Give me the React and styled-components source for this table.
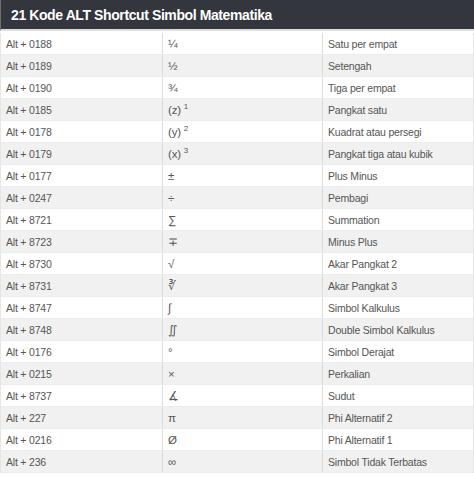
import styled, { createGlobalStyle } from 'styled-components';

const GlobalStyle = createGlobalStyle`
  html, body {
    margin: 0;
    padding: 0;
    background: #ffffff;
  }
`;

const Wrapper = styled.div`
  width: 474px;
  height: 477px;
  overflow: hidden;
  background: #fff;
  font-family: 'Liberation Sans', Arial, sans-serif;
`;

const Header = styled.div`
  height: 29px;
  display: flex;
  align-items: center;
  padding-left: 10px;
  background: #33363c;
  color: #ffffff;
  font-size: 14px;
  letter-spacing: -0.4px;
  font-weight: bold;
  border-left: 1px solid #6a6d72;
  border-bottom: 2px solid #dedede;
  margin-bottom: 2px;
`;

const Table = styled.div`
  width: 472px;
  border-left: 1px solid #e6e6e6;
  border-right: 1px solid #e6e6e6;
`;

const Row = styled.div`
  display: grid;
  grid-template-columns: 161px 160px 1fr;
  height: 22px;
  background: ${(p) => (p.$alt ? '#f1f1f1' : '#ffffff')};
  border-bottom: 1px solid #ececec;
  box-sizing: border-box;
`;

const Cell = styled.div`
  display: flex;
  align-items: center;
  padding-left: 5px;
  border-left: ${(p) => (p.$first ? 'none' : '1px solid #dcdcdc')};
  color: #555555;
  font-size: ${(p) => (p.$symbol ? '11.5px' : '10.5px')};
  letter-spacing: -0.2px;
  white-space: nowrap;
`;

const Sup = styled.span`
  font-size: 8px;
  margin-left: 3px;
  position: relative;
  top: -3px;
`;

const rows = [
  ['Alt + 0188', '¼', 'Satu per empat'],
  ['Alt + 0189', '½', 'Setengah'],
  ['Alt + 0190', '¾', 'Tiga per empat'],
  ['Alt + 0185', ['(z)', '1'], 'Pangkat satu'],
  ['Alt + 0178', ['(y)', '2'], 'Kuadrat atau persegi'],
  ['Alt + 0179', ['(x)', '3'], 'Pangkat tiga atau kubik'],
  ['Alt + 0177', '±', 'Plus Minus'],
  ['Alt + 0247', '÷', 'Pembagi'],
  ['Alt + 8721', '∑', 'Summation'],
  ['Alt + 8723', '∓', 'Minus Plus'],
  ['Alt + 8730', '√', 'Akar Pangkat 2'],
  ['Alt + 8731', '∛', 'Akar Pangkat 3'],
  ['Alt + 8747', '∫', 'Simbol Kalkulus'],
  ['Alt + 8748', '∬', 'Double Simbol Kalkulus'],
  ['Alt + 0176', '°', 'Simbol Derajat'],
  ['Alt + 0215', '×', 'Perkalian'],
  ['Alt + 8737', '∡', 'Sudut'],
  ['Alt + 227', 'π', 'Phi Alternatif 2'],
  ['Alt + 0216', 'Ø', 'Phi Alternatif 1'],
  ['Alt + 236', '∞', 'Simbol Tidak Terbatas'],
];

export default function App() {
  return (
    <Wrapper>
      <GlobalStyle />
      <Header>21 Kode ALT Shortcut Simbol Matematika</Header>
      <Table>
        {rows.map(([code, symbol, name], i) => (
          <Row key={code} $alt={i % 2 === 1}>
            <Cell $first>{code}</Cell>
            <Cell $symbol>
              {Array.isArray(symbol) ? (
                <>
                  {symbol[0]}
                  <Sup>{symbol[1]}</Sup>
                </>
              ) : (
                symbol
              )}
            </Cell>
            <Cell>{name}</Cell>
          </Row>
        ))}
      </Table>
    </Wrapper>
  );
}
